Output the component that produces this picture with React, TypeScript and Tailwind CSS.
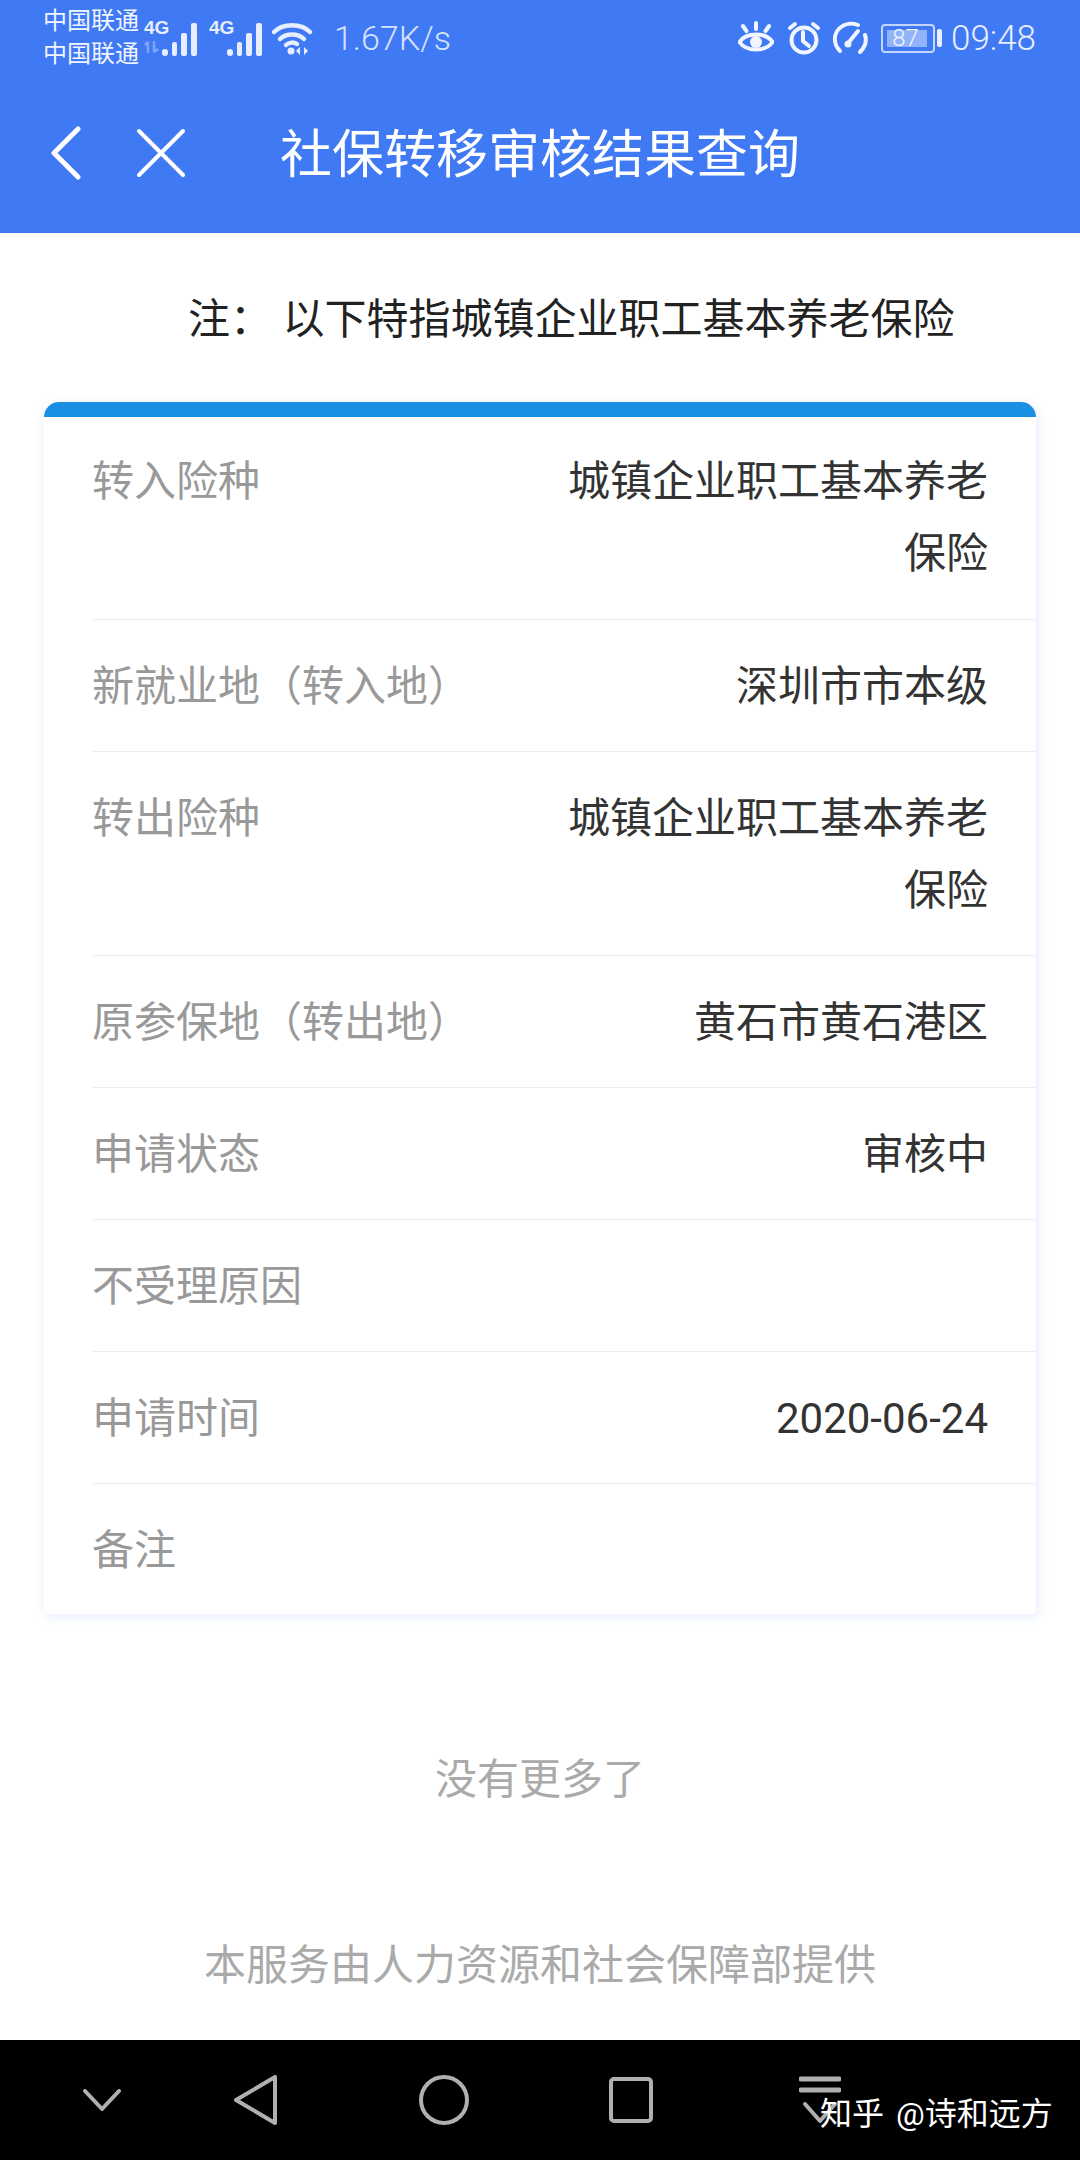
import React from "react";

const rows = [
  { label: "转入险种", value: "城镇企业职工基本养老保险", first: true },
  { label: "新就业地（转入地）", value: "深圳市市本级" },
  { label: "转出险种", value: "城镇企业职工基本养老保险" },
  { label: "原参保地（转出地）", value: "黄石市黄石港区" },
  { label: "申请状态", value: "审核中" },
  { label: "不受理原因", value: "" },
  { label: "申请时间", value: "2020-06-24" },
  { label: "备注", value: "", last: true },
];

function Signal({ dim }: { dim?: boolean }) {
  return (
    <div className="relative w-[54px] h-[36px]">
      <span className="absolute left-0 top-[-3px] text-[19px] leading-[20px] font-bold text-[#e6eeff] font-['Liberation_Sans_Narrow','Liberation_Sans',sans-serif]">
        4G
      </span>
      {dim && (
        <svg className="absolute left-0 top-[19px]" width="16" height="14" viewBox="0 0 16 14" fill="none" stroke="#7fa4f7" strokeWidth="2.5">
          <path d="M4 13V2M1 5l3-3M10 1v11M10 12l4-3" />
        </svg>
      )}
      <svg className="absolute right-0 bottom-0" width="36" height="34" viewBox="0 0 36 34" fill="#e6eeff">
        <rect x="0" y="26" width="6" height="7" rx="3" />
        <rect x="10" y="19" width="5" height="14" rx="2" />
        <rect x="19" y="10" width="6" height="23" rx="2" />
        <rect x="29" y="0" width="6" height="33" rx="2" />
      </svg>
    </div>
  );
}

function StatusBar() {
  return (
    <div className="flex items-center h-[60px] pt-[16px] text-white">
      <div className="ml-[43px] w-[96px] text-[24px] leading-[33px] text-[#f0f5ff]">
        <div>中国联通</div>
        <div>中国联通</div>
      </div>
      <div className="ml-[5px] mt-[2px]">
        <Signal dim />
      </div>
      <div className="ml-[11px] mt-[2px]">
        <Signal />
      </div>
      <svg className="ml-[9px] mt-[2px]" width="42" height="34" viewBox="0 0 42 34" fill="none" stroke="#e6eeff" strokeWidth="4.5" strokeLinecap="round">
        <path d="M2 10C11 1 29 1 38 10" />
        <path d="M8 17C14 11 26 11 32 17" />
        <path d="M14 23C17 20 22 20 25 22" />
        <circle cx="19" cy="29" r="3.5" fill="#e6eeff" stroke="none" />
        <path d="M28 25v8l-4-4zM32 25v8l4-4z" fill="#e6eeff" stroke="none" />
      </svg>
      <span className="ml-[20px] text-[34px] leading-none font-light text-[#d5e2fd]">1.67K/s</span>
      <div className="flex-1" />
      <svg className="mr-[3px]" width="36" height="34" viewBox="0 0 36 34" fill="none" stroke="#f0f5ff" strokeWidth="4" strokeLinecap="round">
        <path d="M1.5 21C8 11 28 11 34.5 21C28 31 8 31 1.5 21Z" />
        <circle cx="18" cy="21" r="6" fill="#f0f5ff" stroke="none" />
        <path d="M18 2v6M5 5l3.5 5M31 5l-3.5 5" />
      </svg>
      <svg className="ml-[10px]" width="34" height="34" viewBox="0 0 34 34" fill="none" stroke="#f0f5ff" strokeWidth="4" strokeLinecap="round">
        <circle cx="17" cy="19" r="12.5" />
        <path d="M16 11v9l6 5M3 7l5-4M31 7l-5-4" />
      </svg>
      <svg className="ml-[11px]" width="36" height="34" viewBox="0 0 36 34" fill="none" stroke="#f0f5ff" strokeWidth="4" strokeLinecap="round">
        <path d="M8 30C1 23 1 12 9 6C14 2 21 2 26 4" />
        <path d="M33 14C35 20 33 26 28 31" />
        <path d="M26 10L17 21" />
        <circle cx="16" cy="23" r="3.5" fill="#f0f5ff" stroke="none" />
      </svg>
      <div className="ml-[13px] flex items-center">
        <div className="relative w-[54px] h-[29px] rounded-[4px] border-2 border-[#c3d5fb]">
          <div className="absolute left-[4px] top-[4px] bottom-[4px] w-[40px] bg-[#92b3f9]" />
          <span className="relative flex justify-center pr-[5px] text-[24px] leading-[25px] font-light text-[#f0f5ff]">87</span>
        </div>
        <div className="ml-[2px] w-[5px] h-[18px] rounded-[2px] bg-[#e6eeff]" />
      </div>
      <span className="ml-[9px] mr-[44px] text-[35px] leading-none font-light text-[#e6eeff]">09:48</span>
    </div>
  );
}

function Header() {
  return (
    <div className="h-[233px] bg-[#4079f4]">
      <StatusBar />
      <div className="flex items-center h-[96px] mt-[45px]">
        <svg className="ml-[50px]" width="32" height="54" viewBox="0 0 32 54" fill="none" stroke="#fff" strokeWidth="5" strokeLinecap="round" strokeLinejoin="round">
          <path d="M28 3L4 27L28 51" />
        </svg>
        <svg className="ml-[54px]" width="50" height="50" viewBox="0 0 50 50" fill="none" stroke="#fff" strokeWidth="4" strokeLinecap="round">
          <path d="M3 3L47 47M47 3L3 47" />
        </svg>
        <h1 className="ml-[94px] pt-[6px] text-[52px] leading-[72px] font-normal text-white">社保转移审核结果查询</h1>
      </div>
    </div>
  );
}

function Row({ label, value, first, last }: { label: string; value: string; first?: boolean; last?: boolean }) {
  return (
    <div className={`flex justify-between ml-[48px] pr-[48px] ${first ? "pt-[29px] pb-[29px] border-b border-[#eeeeee]" : last ? "pt-[31px] pb-[27px]" : "pt-[31px] pb-[28px] border-b border-[#eeeeee]"}`}>
      <span className="text-[#999999] whitespace-nowrap">{label}</span>
      <span className="w-[420px] text-right text-[#333333]">{value}</span>
    </div>
  );
}

function App() {
  return (
    <div className="w-[1080px] h-[2160px] bg-white flex flex-col overflow-hidden font-['Roboto','Noto_Sans_CJK_SC',sans-serif]">
      <Header />
      <p className="mt-[57px] pl-[188px] text-[42px] leading-[60px] text-[#222222] whitespace-pre">注： 以下特指城镇企业职工基本养老保险</p>
      <div className="mt-[52px] mx-[44px] rounded-t-[16px] rounded-b-[4px] bg-white text-[42px] leading-[72px] shadow-[2px_2px_12px_rgba(64,121,244,0.15)]">
        <div className="h-[15px] rounded-t-[22px] bg-[#1a8fe3]" />
        {rows.map((r) => (
          <Row key={r.label} {...r} />
        ))}
      </div>
      <p className="mt-[136px] text-center text-[42px] leading-[60px] text-[#aaaaaa]">没有更多了</p>
      <p className="mt-[126px] text-center text-[42px] leading-[60px] text-[#aaaaaa]">本服务由人力资源和社会保障部提供</p>
      <div className="flex-1" />
      <div className="relative flex items-center h-[120px] bg-black">
        <svg className="ml-[83px]" width="38" height="22" viewBox="0 0 38 22" fill="none" stroke="#b0b0b0" strokeWidth="4" strokeLinecap="round" strokeLinejoin="round">
          <path d="M2 2L19 20L36 2" />
        </svg>
        <svg className="ml-[113px]" width="44" height="50" viewBox="0 0 44 50" fill="none" stroke="#b0b0b0" strokeWidth="4" strokeLinejoin="round">
          <path d="M41 2V48L2 25Z" />
        </svg>
        <svg className="ml-[141px]" width="50" height="50" viewBox="0 0 50 50" fill="none" stroke="#b0b0b0" strokeWidth="4">
          <circle cx="25" cy="25" r="23" />
        </svg>
        <svg className="ml-[140px]" width="44" height="46" viewBox="0 0 44 46" fill="none" stroke="#b0b0b0" strokeWidth="4">
          <rect x="2" y="2" width="40" height="42" rx="3" />
        </svg>
        <svg className="ml-[146px]" width="42" height="48" viewBox="0 0 42 48" fill="none" stroke="#b0b0b0" strokeLinecap="round" strokeLinejoin="round">
          <path d="M2 3H40M2 14H40" strokeWidth="5" />
          <path d="M6 28L21 45L36 28" strokeWidth="4" />
        </svg>
        <span className="absolute left-[820px] top-[52px] text-[32px] leading-[44px] text-white whitespace-pre [word-spacing:4px]">知乎 @诗和远方</span>
      </div>
    </div>
  );
}

export default App;
